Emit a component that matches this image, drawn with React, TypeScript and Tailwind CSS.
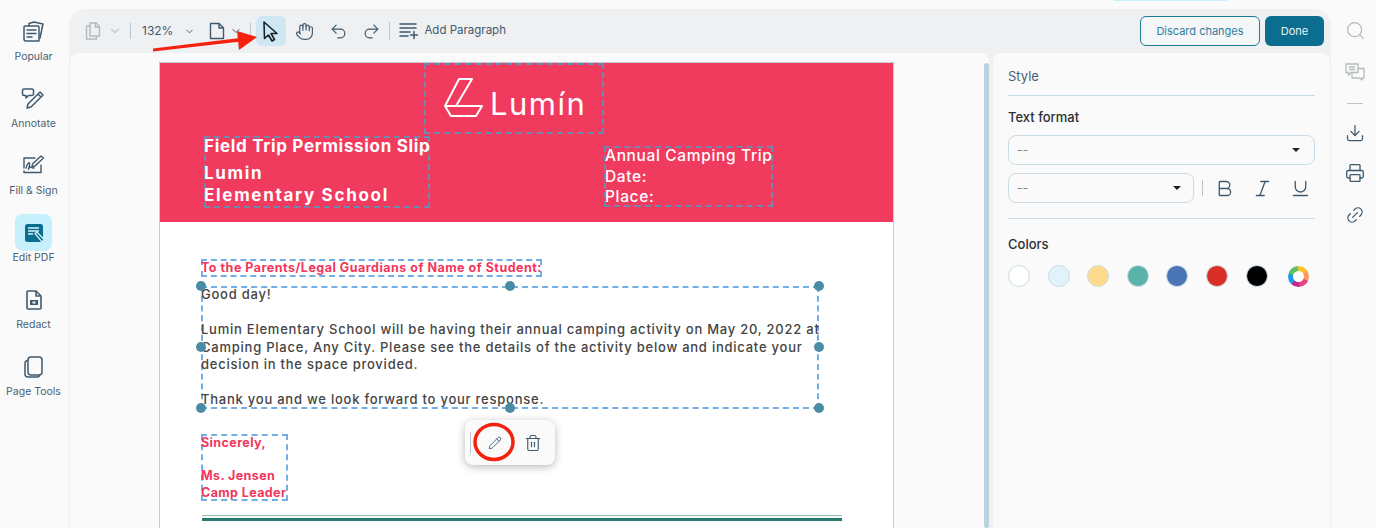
import { ChevronDown, Hand, Undo2, Redo2, Search, Download, Printer, Link2, Trash2, Pencil, Bold, Italic, Underline } from "lucide-react";

const swatches = ["bg-white", "bg-[#e0f3fa]", "bg-[#fcdc8c]", "bg-[#5ab3a8]", "bg-[#4a76b5]", "bg-[#d92f26]", "bg-black"];

const handles = [
  "left-[36px] top-[218px]",
  "left-[345px] top-[218px]",
  "left-[654px] top-[218px]",
  "left-[36px] top-[279px]",
  "left-[654px] top-[279px]",
  "left-[36px] top-[340px]",
  "left-[345px] top-[340px]",
  "left-[654px] top-[340px]",
];

function PopularIcon() {
  return (
    <svg width="24" height="24" viewBox="0 0 24 24" fill="none" stroke="#3f5a6e" strokeWidth="1.5" strokeLinejoin="round" strokeLinecap="round">
      <path d="M4 6h13a1 1 0 0 1 1 1v14H5a2 2 0 0 1-2-2V7a1 1 0 0 1 1-1z" />
      <path d="M8 6V3.500l5-1.500 9 2-3 14M6 10h9M6 13.500h9M6 17h5" />
    </svg>
  );
}

function AnnotateIcon() {
  return (
    <svg width="24" height="24" viewBox="0 0 24 24" fill="none" stroke="#3f5a6e" strokeWidth="1.5" strokeLinejoin="round" strokeLinecap="round">
      <path d="M3 2h8a1.500 1.500 0 0 1 1.500 1.500V7A1.500 1.500 0 0 1 11 8.500H7.500L5 11V8.500H3A1.500 1.500 0 0 1 1.500 7V3.500A1.500 1.500 0 0 1 3 2z" />
      <path d="M19 5l3 3L10 20l-4 1 1-4L19 5zM17 7l3 3" />
    </svg>
  );
}

function FillSignIcon() {
  return (
    <svg width="24" height="24" viewBox="0 0 24 24" fill="none" stroke="#3f5a6e" strokeWidth="1.4" strokeLinejoin="round" strokeLinecap="round">
      <path d="M14 4H3v10M3 17v1.500h17V11" />
      <path d="M20 2l2.500 2L14 12l-3 1 .5-3L20 2z" />
      <path d="M5 14c1-4 3-6 3.500-5s-.5 5-1 6 1.500-2.500 2.500-2 1 1.500 3 1" />
    </svg>
  );
}

function EditPdfIcon() {
  return (
    <svg width="20" height="20" viewBox="0 0 20 20" fill="none">
      <rect x="1" y="1" width="18" height="18" rx="2.500" fill="#0b6e8e" />
      <path d="M4 5h11M4 8h11M4 11h5" stroke="#d6f3fb" strokeWidth="1.300" />
      <path d="M11 10.500l2-1.500 7 7.500-2 2.500-7-8.500z" fill="#0b6e8e" stroke="#d6f3fb" strokeWidth="1.200" />
    </svg>
  );
}

function RedactIcon() {
  return (
    <svg width="24" height="24" viewBox="0 0 24 24" fill="none" stroke="#3f5a6e" strokeWidth="1.600" strokeLinejoin="round">
      <path d="M6 3h8l5 5v12a1 1 0 0 1-1 1H6a1 1 0 0 1-1-1V4a1 1 0 0 1 1-1z" />
      <path d="M14 3v5h5" />
      <rect x="8" y="12" width="8" height="5" fill="#3f5a6e" stroke="none" />
      <rect x="10.500" y="13.500" width="3" height="2" fill="#fafafa" stroke="none" />
    </svg>
  );
}

function PageToolsIcon() {
  return (
    <svg width="24" height="24" viewBox="0 0 24 24" fill="none" stroke="#3f5a6e" strokeWidth="1.500" strokeLinejoin="round">
      <rect x="7" y="2" width="14" height="18" rx="3" />
      <path d="M7 5.500C5 5.500 4 7 4 8.500V19a3 3 0 0 0 3 3h9c1.500 0 2.500-1 2.500-2" />
    </svg>
  );
}

function CursorIcon() {
  return (
    <svg width="20" height="22" viewBox="0 0 20 22" fill="none" stroke="#17232d" strokeWidth="1.600" strokeLinejoin="round">
      <path d="M3 2l13 11.500h-6l3.500 6-2.500 1.500-3.500-6L3.500 18.500z" />
    </svg>
  );
}

function CopyIcon() {
  return (
    <svg width="18" height="18" viewBox="0 0 18 18" fill="none" stroke="#b4b8bc" strokeWidth="1.400" strokeLinejoin="round">
      <path d="M6 1h6l3.500 3.500v9.500H6z" />
      <path d="M11.500 1v4h4" />
      <path d="M6 4H2.500v13h10v-3" />
    </svg>
  );
}

function PageIcon() {
  return (
    <svg width="16" height="18" viewBox="0 0 16 18" fill="none" stroke="#3f5a6e" strokeWidth="1.400" strokeLinejoin="round">
      <path d="M1.500 1.500h8.500l4.500 4.500v10.500H1.500z" />
      <path d="M10 1.500V6h4.500" />
    </svg>
  );
}

function AddParagraphIcon() {
  return (
    <svg width="20" height="18" viewBox="0 0 20 18" fill="none" stroke="#3f5a6e" strokeWidth="1.500" strokeLinecap="round">
      <path d="M1 2h16M1 6h16M1 10h10M1 14h8M15 9.500v7M11.500 13h7" />
    </svg>
  );
}

function CommentIcon() {
  return (
    <svg width="20" height="20" viewBox="0 0 20 20" fill="none" stroke="#b4babd" strokeWidth="1.300" strokeLinejoin="round">
      <path d="M1 2h12v8.500H6l-2.500 2.500v-2.500H1z" />
      <path d="M13 6.500h6v9.500h-2v2l-2.500-2H7V10.500" />
      <path d="M4 5h6M4 7.500h6" />
    </svg>
  );
}

function Caret() {
  return <span className="w-0 h-0 border-x-[4px] border-x-transparent border-t-[4px] border-t-[#17232d]" />;
}

function Divider({ className }: { className: string }) {
  return <span className={`w-px bg-[#b9c6d0] ${className}`} />;
}

function SidebarItem({ label, icon, active }: { label: string; icon: React.ReactNode; active?: boolean }) {
  return (
    <div className="flex flex-col items-center">
      <div className={`w-[37px] h-[37px] flex items-center justify-center rounded-lg ${active ? "bg-[#c6f0fc]" : ""}`}>{icon}</div>
      <span className="text-[10.500px] leading-[14px] text-[#4a6174] whitespace-nowrap">{label}</span>
    </div>
  );
}

function Toolbar() {
  return (
    <div className="relative h-11 shrink-0 flex items-center pl-[14px] pr-[6px] text-[12px] text-[#3f5a6e]">
      <CopyIcon />
      <ChevronDown size={14} className="ml-[6px] text-[#c4c8cc]" />
      <Divider className="h-[16px] ml-[8px]" />
      <span className="ml-[11px]">132%</span>
      <ChevronDown size={11} className="ml-[11px] text-[#3f5a6e]" />
      <span className="ml-[14px]"><PageIcon /></span>
      <ChevronDown size={12} className="ml-[5px] text-[#3f5a6e]" />
      <Divider className="h-[16px] ml-[8px]" />
      <div className="ml-[5px] w-[30px] h-[30px] rounded-md bg-[#cfe6f3] flex items-center justify-center">
        <CursorIcon />
      </div>
      <Hand size={19} strokeWidth={1.5} className="ml-[9px]" />
      <Undo2 size={19} strokeWidth={1.5} className="ml-[15px]" />
      <Redo2 size={19} strokeWidth={1.5} className="ml-[14px]" />
      <Divider className="h-[18px] ml-[8px]" />
      <span className="ml-[9px]"><AddParagraphIcon /></span>
      <span className="ml-[5px] text-[11.500px]">Add Paragraph</span>
      <div className="ml-auto flex items-center gap-[5px]">
        <button className="h-[30px] w-[120px] rounded-md border border-[#1d7a98] text-[#2f7f9b] bg-[#f4f6f7] text-[11px]">Discard changes</button>
        <button className="h-[30px] w-[59px] rounded-md bg-[#0b6e8e] text-[#e8f4f8] text-[11px]">Done</button>
      </div>
    </div>
  );
}

function PdfPage() {
  const dashedRed = "absolute border-2 border-dashed border-[#6e89b0]";
  const dashedBlue = "absolute border-2 border-dashed border-[#72afe6]";

  return (
    <div className="absolute left-[89px] top-[9px] w-[735px] h-[560px] bg-white border border-[#c3cbd6]">
      <div className="h-[159px] bg-[#f03a5e]" />

      <div className={`${dashedRed} left-[264px] top-0 w-[180px] h-[71px] flex items-end pl-[18px] pb-[14px]`}>
        <svg width="40" height="40" viewBox="0 0 40 40" fill="none" stroke="white" strokeWidth="2" strokeLinejoin="round">
          <path d="M15 1H28L12 28H1z" />
          <path d="M12 28H38L32 38H7L1 28" />
        </svg>
        <span className="text-white text-[31px] leading-[28px] tracking-[1.5px] ml-[6px]">Lumín</span>
      </div>

      <div className={`${dashedRed} left-[44px] top-[73px] w-[226px] h-[72px] text-white font-bold whitespace-nowrap`}>
        <div className="-ml-[2px] -mt-[2px]">
          <div className="text-[17px] tracking-[0.68px] leading-[20px]">Field Trip Permission Slip</div>
          <div className="text-[17px] tracking-[1.7px] leading-[22px] mt-[6px]">Lumin</div>
          <div className="text-[17px] tracking-[1.7px] leading-[22px]">Elementary School</div>
        </div>
      </div>

      <div className={`${dashedRed} left-[444px] top-[83px] w-[169px] h-[61px] text-white text-[15.500px] font-medium leading-[20.500px] whitespace-nowrap tracking-[0.65px]`}>
        <div className="-ml-[1px] -mt-[2px]">
          <div>Annual Camping Trip</div>
          <div>Date:</div>
          <div>Place:</div>
        </div>
      </div>

      <div className={`${dashedBlue} left-[41px] top-[196px] w-[341px] h-[18px] text-[#f4365c] text-[12.500px] font-bold leading-[15px] tracking-[0.5px] whitespace-nowrap`}>
        <div className="-ml-[2px] -mt-[1px]">To the Parents/Legal Guardians of Name of Student:</div>
      </div>

      <div className={`${dashedBlue} left-[41px] top-[223px] w-[618px] h-[123px] text-[#444444] text-[13px] font-medium leading-[17.500px] tracking-[0.76px] whitespace-nowrap`}>
        <div className="-ml-[2px] -mt-[2px]">
          <div>Good day!</div>
          <div className="mt-[17.500px]">Lumin Elementary School will be having their annual camping activity on May 20, 2022 at</div>
          <div>Camping Place, Any City. Please see the details of the activity below and indicate your</div>
          <div>decision in the space provided.</div>
          <div className="mt-[17.500px]">Thank you and we look forward to your response.</div>
        </div>
      </div>

      {handles.map((pos) => (
        <span key={pos} className={`absolute w-[10px] h-[10px] rounded-full bg-[#4a8ca5] ${pos}`} />
      ))}

      <div className={`${dashedBlue} left-[41px] top-[371px] w-[87px] h-[67px] text-[#f4365c] text-[12.500px] font-bold leading-[16.500px] tracking-[0.4px] whitespace-nowrap`}>
        <div className="-ml-[2px] -mt-[1px]">
          <div>Sincerely,</div>
          <div className="mt-[16.500px]">Ms. Jensen</div>
          <div>Camp Leader</div>
        </div>
      </div>

      <div className="absolute left-[42px] top-[452px] w-[640px] flex flex-col gap-[2px]">
        <div className="h-px bg-[#8fbcb0]" />
        <div className="h-[3px] bg-[#267a70]" />
      </div>

      <div className="absolute left-[305px] top-[357px] w-[90px] h-[45px] rounded-lg bg-[#fafafa] shadow-[0_2px_8px_rgba(0,0,0,0.28)] flex items-center pl-[5px] text-[#3f5a6e]">
        <Divider className="h-[22px]" />
        <Pencil size={14} strokeWidth={1.5} className="ml-[17px]" />
        <Trash2 size={18} strokeWidth={1.5} className="ml-[22px]" />
      </div>
    </div>
  );
}

function StylePanel() {
  return (
    <div className="w-[337px] shrink-0 bg-[#fafafa] rounded-t-lg px-[15px] pt-[14px]">
      <div className="text-[13px] leading-[18px] text-[#4a6174] pb-[10px] border-b border-[#cbdbe6]">Style</div>
      <div className="text-[13px] font-medium leading-[18px] text-[#2a2f33] mt-[12px]">Text format</div>
      <div className="mt-[9px] h-[30px] w-[307px] rounded-lg border border-[#cbdbe6] flex items-center justify-between px-[8px] pr-[14px] text-[12px] text-[#6f8496]">
        <span>--</span>
        <Caret />
      </div>
      <div className="mt-[8px] flex items-center">
        <div className="h-[30px] w-[186px] rounded-lg border border-[#cbdbe6] flex items-center justify-between px-[8px] pr-[12px] text-[12px] text-[#6f8496]">
          <span>--</span>
          <Caret />
        </div>
        <Divider className="h-[16px] ml-[8px]" />
        <Bold size={21} strokeWidth={1.5} className="ml-[11px] text-[#3f5a6e]" />
        <Italic size={21} strokeWidth={1.5} className="ml-[17px] text-[#3f5a6e]" />
        <Underline size={21} strokeWidth={1.5} className="ml-[17px] text-[#3f5a6e]" />
      </div>
      <div className="mt-[15px] border-b border-[#cbdbe6]" />
      <div className="text-[13px] font-medium leading-[18px] text-[#2a2f33] mt-[16px]">Colors</div>
      <div className="mt-[12px] flex items-center gap-[17.600px]">
        {swatches.map((c) => (
          <span key={c} className={`w-[22px] h-[22px] rounded-full border border-[#cbdbe6] ${c}`} />
        ))}
        <span className="w-[21px] h-[21px] ml-[3px] rounded-full bg-[conic-gradient(#fcc22f_0_16%,#f79a5e_16%_32%,#e8447c_32%_50%,#c2278e_50%_62%,#1d9be8_62%_80%,#5cc067_80%_100%)] flex items-center justify-center">
          <span className="w-[11px] h-[11px] rounded-full bg-white" />
        </span>
      </div>
    </div>
  );
}

export default function App() {
  return (
    <div className="relative w-[1376px] h-[528px] overflow-hidden bg-[#fafafa] flex font-['Inter',sans-serif]">
      <div className="absolute left-[1114px] top-0 w-[113px] h-px bg-[#c6f0fc]" />

      <aside className="w-[69px] shrink-0 pr-[2px] pt-[13px] flex flex-col gap-[16px] items-center">
        <SidebarItem label="Popular" icon={<PopularIcon />} />
        <SidebarItem label="Annotate" icon={<AnnotateIcon />} />
        <SidebarItem label="Fill & Sign" icon={<FillSignIcon />} />
        <SidebarItem label="Edit PDF" icon={<EditPdfIcon />} active />
        <SidebarItem label="Redact" icon={<RedactIcon />} />
        <SidebarItem label="Page Tools" icon={<PageToolsIcon />} />
      </aside>

      <main className="w-[1262px] shrink-0 mt-[9px] rounded-t-[16px] bg-[#eff0f2] flex flex-col pl-px pr-px">
        <Toolbar />
        <div className="flex-1 min-h-0 flex gap-[4px]">
          <div className="relative w-[919px] shrink-0 bg-[#fafafa] rounded-t-lg overflow-hidden">
            <PdfPage />
            <div className="absolute right-0 top-[10px] bottom-0 w-[5px] rounded-full bg-[#bcd2de]" />
          </div>
          <StylePanel />
        </div>
      </main>

      <aside className="w-[45px] shrink-0 flex flex-col items-center pt-[20px] pl-[3px]">
        <Search size={21} strokeWidth={1.4} className="text-[#b4babd]" />
        <span className="mt-[21px]"><CommentIcon /></span>
        <span className="mt-[21px] w-[16px] h-px bg-[#b9c6d0]" />
        <Download size={20} strokeWidth={1.5} className="mt-[19px] text-[#3f5a6e]" />
        <Printer size={20} strokeWidth={1.6} className="mt-[20px] text-[#3f5a6e]" />
        <Link2 size={20} strokeWidth={1.6} className="mt-[22px] -rotate-45 text-[#3f5a6e]" />
      </aside>

      {/* annotations drawn on top of the screenshot */}
      <svg className="absolute left-0 top-0 pointer-events-none" width="1376" height="528" fill="none">
        <path d="M153 48.500L240 38L241 41.500L153 51.500z" fill="#f5210f" />
        <path d="M237 31L257 37L239 50z" fill="#f5210f" />
        <ellipse cx="494" cy="442" rx="19" ry="17.500" stroke="#f5210f" strokeWidth="3.500" />
      </svg>
    </div>
  );
}
